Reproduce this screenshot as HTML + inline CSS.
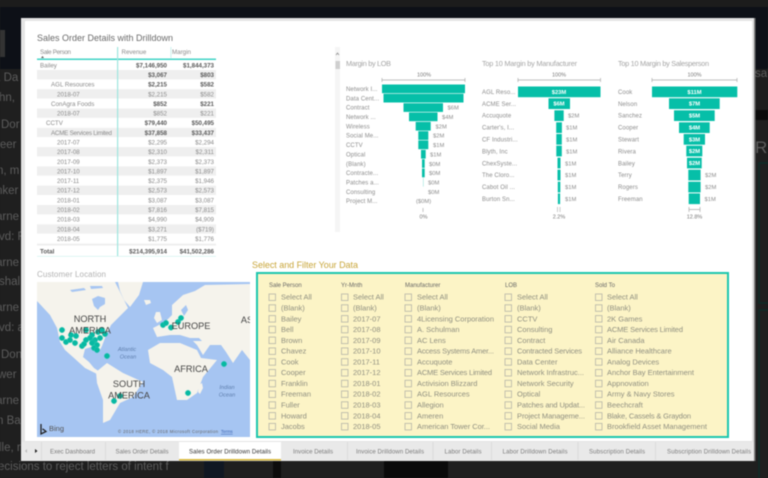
<!DOCTYPE html>
<html><head><meta charset="utf-8"><style>
html,body{margin:0;padding:0;width:768px;height:478px;overflow:hidden;background:#1f1f1f}
svg{display:block;filter:blur(.65px);font-family:"Liberation Sans",sans-serif}
.bg{font-size:11.5px;fill:#5c5c5c}
.d{font-size:6.2px;fill:#8a8a8a}
.b{font-size:6.2px;fill:#5a5a5a;font-weight:bold}
.e{text-anchor:end}
.l{font-size:6px;fill:#8c8c8c;letter-spacing:.1px}
.v{font-size:5.8px;fill:#8c8c8c}
.w{font-size:5.8px;fill:#fff;text-anchor:middle;font-weight:bold}
.t{font-size:7.3px;fill:#a5a5a5}
.m{font-size:5.5px;fill:#777;text-anchor:middle}
.h{font-size:6px;fill:#666}
.s{font-size:7.5px;fill:#8f8f80}
.tab{font-size:6.1px;fill:#7c7c7c;text-anchor:middle}
.map{font-size:9.2px;fill:#444;text-anchor:middle}
.oc{font-size:5.6px;fill:#5f7fae;text-anchor:middle;font-style:italic}
</style></head><body>
<svg width="768" height="478" viewBox="0 0 768 478" xmlns="http://www.w3.org/2000/svg">
<defs>
<clipPath id="mp"><rect x="37" y="282" width="213" height="155"/></clipPath>
<clipPath id="sl"><rect x="258" y="274" width="468" height="157"/></clipPath>
<g id="c" fill="none" stroke="#b5b5a8" stroke-width=".8">
<rect x="0" y="294" width="6.5" height="6.5"/><rect x="0" y="304.8" width="6.5" height="6.5"/><rect x="0" y="315.6" width="6.5" height="6.5"/><rect x="0" y="326.3" width="6.5" height="6.5"/><rect x="0" y="337.1" width="6.5" height="6.5"/><rect x="0" y="347.9" width="6.5" height="6.5"/><rect x="0" y="358.7" width="6.5" height="6.5"/><rect x="0" y="369.5" width="6.5" height="6.5"/><rect x="0" y="380.3" width="6.5" height="6.5"/><rect x="0" y="391" width="6.5" height="6.5"/><rect x="0" y="401.8" width="6.5" height="6.5"/><rect x="0" y="412.6" width="6.5" height="6.5"/><rect x="0" y="423.4" width="6.5" height="6.5"/>
</g>
</defs>

<!-- background page -->
<rect width="768" height="478" fill="#1f1f1f"/>
<rect width="768" height="7" fill="#1c1c1c"/>
<rect y="7" width="768" height="62" fill="#0d1017"/>
<rect x="0" y="30" width="5" height="27" fill="#333"/>
<rect x="755" y="69" width="13" height="41" fill="#1e1e1e"/>
<rect x="755" y="110" width="13" height="10" fill="#0a0a0a"/>
<rect x="759" y="163" width="12" height="140" fill="none" stroke="#0d2c28" stroke-width="1.5"/>
<rect x="759" y="310" width="12" height="170" fill="none" stroke="#0d2c28" stroke-width="1.5"/>
<rect x="204" y="461" width="20" height="17" fill="#101722"/>
<rect x="273" y="461" width="8" height="17" fill="#0c0c0c"/>
<rect x="384" y="461" width="64" height="17" fill="#0a0a0a"/>
<g class="bg">
<text x="-6" y="81">a Da</text><text x="-1" y="101">hn,</text><text x="1" y="128">Dor</text><text x="-4" y="148">reer</text>
<text x="-3" y="174">n, m</text><text x="-4" y="194">nker</text><text x="-4" y="220">arne</text><text x="-1" y="240">vd: F</text>
<text x="-4" y="266">arne</text><text x="-1" y="285">shal</text><text x="-4" y="311">arne</text><text x="-1" y="331">vd: a</text>
<text x="1" y="358">Don</text><text x="-2" y="378">wer</text><text x="-4" y="404">arne</text><text x="-3" y="424">n Ba</text>
<text x="-1" y="451">lle, r</text><text x="-2" y="470">ecisions to reject letters of intent f</text>
<text x="755" y="77">sal</text><text x="755" y="153" style="font-size:17px">R</text>
</g>

<!-- panel -->
<rect x="21" y="18" width="734" height="443" fill="#e4e4e4"/>
<rect x="25" y="21" width="727" height="420" fill="#fff"/>
<rect x="754" y="18" width="1.5" height="443" fill="#777"/>

<!-- table -->
<text x="37" y="41" font-size="9" fill="#6a6a6a" textLength="136">Sales Order Details with Drilldown</text>
<text x="40" y="54" class="d" textLength="31">Sale Person</text><text x="121.5" y="54" class="d">Revenue</text><text x="172" y="54" class="d">Margin</text>
<path d="M41 58h3l-1.500-2z" fill="#555"/>
<g fill="#efefef">
<rect x="37" y="70" width="179" height="9.3"/><rect x="37" y="89.2" width="179" height="9.3"/><rect x="37" y="108.5" width="179" height="9.3"/><rect x="37" y="127.8" width="179" height="9.3"/><rect x="37" y="147.1" width="179" height="9.3"/><rect x="37" y="166.4" width="179" height="9.3"/><rect x="37" y="185.7" width="179" height="9.3"/><rect x="37" y="205" width="179" height="9.3"/><rect x="37" y="224.3" width="179" height="9.3"/><rect x="37" y="243.6" width="179" height="2"/>
</g>
<rect x="37" y="58.5" width="179" height="1.5" fill="#3fd3c5"/>
<rect x="117" y="47" width="1.2" height="209" fill="#9fe6df"/>
<rect x="170.5" y="47" width=".8" height="11" fill="#bdeee9"/>
<rect x="37" y="256" width="179" height=".6" fill="#c9f1ec"/>
<text x="40" y="67.3" class="d">Bailey</text><text x="167" y="67.3" class="b e">$7,146,950</text><text x="214" y="67.3" class="b e">$1,844,373</text>
<text x="167" y="76.9" class="b e">$3,067</text><text x="214" y="76.9" class="b e">$803</text>
<text x="51" y="86.6" class="d">AGL Resources</text><text x="167" y="86.6" class="b e">$2,215</text><text x="214" y="86.6" class="b e">$582</text>
<text x="57" y="96.3" class="d">2018-07</text><text x="167" y="96.3" class="d e">$2,215</text><text x="214" y="96.3" class="d e">$582</text>
<text x="51" y="105.9" class="d">ConAgra Foods</text><text x="167" y="105.9" class="b e">$852</text><text x="214" y="105.9" class="b e">$221</text>
<text x="57" y="115.6" class="d">2018-07</text><text x="167" y="115.6" class="d e">$852</text><text x="214" y="115.6" class="d e">$221</text>
<text x="46" y="125.2" class="d">CCTV</text><text x="167" y="125.2" class="b e">$79,440</text><text x="214" y="125.2" class="b e">$50,495</text>
<text x="51" y="134.8" class="d" textLength="61">ACME Services Limited</text><text x="167" y="134.8" class="b e">$37,858</text><text x="214" y="134.8" class="b e">$33,437</text>
<text x="57" y="144.5" class="d">2017-07</text><text x="167" y="144.5" class="d e">$2,295</text><text x="214" y="144.5" class="d e">$2,294</text>
<text x="57" y="154.1" class="d">2017-08</text><text x="167" y="154.1" class="d e">$2,310</text><text x="214" y="154.1" class="d e">$2,311</text>
<text x="57" y="163.8" class="d">2017-09</text><text x="167" y="163.8" class="d e">$2,373</text><text x="214" y="163.8" class="d e">$2,373</text>
<text x="57" y="173.4" class="d">2017-10</text><text x="167" y="173.4" class="d e">$1,897</text><text x="214" y="173.4" class="d e">$1,897</text>
<text x="57" y="183.1" class="d">2017-11</text><text x="167" y="183.1" class="d e">$2,375</text><text x="214" y="183.1" class="d e">$1,946</text>
<text x="57" y="192.7" class="d">2017-12</text><text x="167" y="192.7" class="d e">$2,573</text><text x="214" y="192.7" class="d e">$2,573</text>
<text x="57" y="202.4" class="d">2018-01</text><text x="167" y="202.4" class="d e">$3,087</text><text x="214" y="202.4" class="d e">$3,087</text>
<text x="57" y="212" class="d">2018-02</text><text x="167" y="212" class="d e">$7,816</text><text x="214" y="212" class="d e">$7,815</text>
<text x="57" y="221.7" class="d">2018-03</text><text x="167" y="221.7" class="d e">$4,990</text><text x="214" y="221.7" class="d e">$4,909</text>
<text x="57" y="231.3" class="d">2018-04</text><text x="167" y="231.3" class="d e">$3,271</text><text x="214" y="231.3" class="d e">($719)</text>
<text x="57" y="241" class="d">2018-05</text><text x="167" y="241" class="d e">$1,775</text><text x="214" y="241" class="d e">$1,776</text>
<text x="40" y="253.3" class="b">Total</text><text x="167" y="253.3" class="b e">$214,395,914</text><text x="214" y="253.3" class="b e">$41,502,286</text>

<!-- scrollbar -->
<rect x="335" y="47" width="5" height="185" fill="#f5f5f5"/>
<path d="M336 55l1.500-2 1.500 2" fill="none" stroke="#888" stroke-width=".7"/>
<rect x="335.5" y="61" width="4.5" height="8" fill="#cfcfcf"/>

<!-- funnel 1 -->
<text x="346" y="66" class="t" textLength="45">Margin by LOB</text>
<text x="424" y="76.5" class="m">100%</text>
<path d="M382 78v4M465 78v4M382 80h83" stroke="#aaa" stroke-width=".7" fill="none"/>
<g fill="#06bfa8">
<rect x="382" y="84.5" width="83" height="8.7"/><rect x="383.5" y="93.8" width="80" height="8.7"/><rect x="403.5" y="103.2" width="39.5" height="8.7"/><rect x="409" y="112.5" width="28.5" height="8.7"/><rect x="415.7" y="121.9" width="15" height="8.7"/><rect x="418.3" y="131.2" width="10" height="8.7"/><rect x="418.3" y="140.5" width="10" height="8.7"/><rect x="421" y="149.9" width="4.7" height="8.7"/><rect x="422" y="159.2" width="2.7" height="8.7"/><rect x="422" y="168.6" width="2.7" height="8.7"/><rect x="423" y="177.9" width=".6" height="8.7" opacity=".4"/>
</g>
<g class="l">
<text x="346" y="91">Network I...</text><text x="346" y="100.4">Data Cent...</text><text x="346" y="109.7">Contract</text><text x="346" y="119">Network ...</text><text x="346" y="128.4">Wireless</text><text x="346" y="137.7">Social Me...</text><text x="346" y="147.1">CCTV</text><text x="346" y="156.4">Optical</text><text x="346" y="165.8">(Blank)</text><text x="346" y="175.1">Contracte...</text><text x="346" y="184.4">Patches a...</text><text x="346" y="193.8">Consulting</text><text x="346" y="203.1">Project M...</text>
</g>
<g class="v">
<text x="447.5" y="109.7">$6M</text><text x="442" y="119">$4M</text><text x="435.5" y="128.4">$2M</text><text x="433" y="137.7">$2M</text><text x="433" y="147.1">$1M</text><text x="430" y="156.4">$1M</text><text x="429" y="165.8">$0M</text><text x="429" y="175.1">$0M</text><text x="428" y="184.4">$0M</text><text x="428" y="193.8">$0M</text><text x="416" y="203.1">($0M)</text>
</g>
<path d="M423 208v4" stroke="#aaa" stroke-width=".7"/>
<text x="423.5" y="218.5" class="m">0%</text>

<!-- funnel 2 -->
<text x="482" y="66" class="t" textLength="95">Top 10 Margin by Manufacturer</text>
<text x="559" y="76.5" class="m">100%</text>
<path d="M518 78v4M600.5 78v4M518 80h82.5" stroke="#aaa" stroke-width=".7" fill="none"/>
<g fill="#06bfa8">
<rect x="518" y="86.5" width="82.5" height="10.7"/><rect x="548.5" y="98.3" width="21.5" height="10.7"/><rect x="554.4" y="110.3" width="9.3" height="10.7"/><rect x="556.2" y="122.3" width="5.7" height="10.7"/><rect x="556.3" y="134" width="5.5" height="10.7"/><rect x="556.3" y="145.7" width="5.5" height="10.7"/><rect x="557.5" y="157.7" width="3" height="10.7"/><rect x="557.5" y="169.7" width="3" height="10.7"/><rect x="557.8" y="181.7" width="2.5" height="10.7"/><rect x="557.9" y="193.4" width="2.2" height="10.7"/>
</g>
<text x="559" y="94" class="w">$23M</text><text x="559" y="105.7" class="w">$6M</text>
<g class="l">
<text x="482" y="94">AGL Reso...</text><text x="482" y="105.8">ACME Ser...</text><text x="482" y="117.7">Accuquote</text><text x="482" y="129.6">Carter's, I...</text><text x="482" y="141.5">CF Industri...</text><text x="482" y="153.4">Blyth, Inc</text><text x="482" y="165.3">ChexSyste...</text><text x="482" y="177.2">The Cloro...</text><text x="482" y="189.1">Cabot Oil ...</text><text x="482" y="201">Burton Sn...</text>
</g>
<g class="v">
<text x="568" y="117.7">$2M</text><text x="566" y="129.6">$1M</text><text x="566" y="141.5">$1M</text><text x="566" y="153.4">$1M</text><text x="565" y="165.3">$1M</text><text x="565" y="177.2">$1M</text><text x="565" y="189.1">$1M</text><text x="565" y="201">$1M</text>
</g>
<path d="M557.5 207v5M560 207v5" stroke="#aaa" stroke-width=".6"/>
<text x="559" y="218.5" class="m">2.2%</text>

<!-- funnel 3 -->
<text x="618" y="66" class="t" textLength="91">Top 10 Margin by Salesperson</text>
<text x="694.5" y="76.5" class="m">100%</text>
<path d="M652 78v4M737 78v4M652 80h85" stroke="#aaa" stroke-width=".7" fill="none"/>
<g fill="#06bfa8">
<rect x="652" y="86.5" width="85.3" height="10.7"/><rect x="669" y="98.3" width="50.7" height="10.7"/><rect x="674" y="110.3" width="40.7" height="10.7"/><rect x="679" y="122.3" width="30.7" height="10.7"/><rect x="683.7" y="134" width="21.3" height="10.7"/><rect x="686.3" y="145.7" width="16" height="10.7"/><rect x="687" y="157.7" width="14.7" height="10.7"/><rect x="688.3" y="169.7" width="12.3" height="10.7"/><rect x="688.3" y="181.7" width="12.3" height="10.7"/><rect x="688.7" y="193.4" width="11.3" height="10.7"/>
</g>
<text x="694.5" y="94" class="w">$11M</text><text x="694.5" y="105.7" class="w">$7M</text><text x="694.5" y="117.6" class="w">$5M</text><text x="694.5" y="129.5" class="w">$4M</text><text x="694.5" y="141.4" class="w">$3M</text><text x="694.5" y="153.2" class="w">$2M</text><text x="694.5" y="165.1" class="w">$2M</text>
<g class="l">
<text x="618" y="94">Cook</text><text x="618" y="105.8">Nelson</text><text x="618" y="117.7">Sanchez</text><text x="618" y="129.6">Cooper</text><text x="618" y="141.5">Stewart</text><text x="618" y="153.4">Rivera</text><text x="618" y="165.3">Bailey</text><text x="618" y="177.2">Terry</text><text x="618" y="189.1">Rogers</text><text x="618" y="201">Freeman</text>
</g>
<g class="v"><text x="705" y="177.2">$2M</text><text x="705" y="189.1">$2M</text><text x="704.5" y="201">$1M</text></g>
<path d="M689 207v5M700 207v5M689 209.5h11" stroke="#aaa" stroke-width=".7" fill="none"/>
<text x="694.5" y="218.5" class="m">12.8%</text>

<!-- map -->
<text x="37" y="277" font-size="8" fill="#b2b2b2" textLength="69">Customer Location</text>
<g clip-path="url(#mp)">
<rect x="37" y="282" width="213" height="155" fill="#a6c5f2"/>
<g fill="#f5f3ec">
<path d="M37 282H115L122 296L128 308L120 316L111 325L105 338L102 346L99 352L97 351L94 346L85 349L83 357L89 362L94 368L100 372L97 374L85 368L74 358L65 350L60 342L57 328L50 315L37 301Z"/>
<path d="M118 282H143L139 295L130 307L124 300L120 291Z"/>
<path d="M144 300l6 0 1 3-5 2z"/>
<path d="M156 312l4 0 2 8-5 3-3-5z"/>
<path d="M96 372L107 363L123 373L143 382L133 397L120 403L110 420L103 423L103 400L97 383Z"/>
<path d="M148 350L160 343L180 343L197 350L201 358L217 360L203 377L197 393L187 400L177 400L172 377L163 370L150 363Z"/>
<path d="M199 385l3-2 1 5-3 6-2-2z"/>
<path d="M157 337L153 328L165 322L172 315L172 305L183 295L195 291L205 285L250 284V360L242 350L233 363L226 352L221 345L210 345L203 355L197 345L190 338L180 335L170 335Z"/>
</g>
<path d="M92 299l6-3 7 2 0 6-5 3-2 3-4-4zM181 310l5-5 2 5-4 6zM187 338l12 0 3 3-13 0zM70 290l14-2 2 2-14 2zM90 286l12 0 1 2-12 1z" fill="#a6c5f2"/>
<g fill="#07b9a2" stroke="#2cc8b4" stroke-width=".4">
<circle cx="62" cy="330" r="2.7"/><circle cx="62" cy="338" r="2.7"/><circle cx="66" cy="342" r="2.7"/><circle cx="70" cy="340" r="2.7"/><circle cx="75" cy="343" r="2.7"/><circle cx="71" cy="335" r="2.7"/><circle cx="76" cy="336" r="2.7"/><circle cx="86" cy="330" r="2.7"/><circle cx="82" cy="346" r="2.7"/><circle cx="84" cy="344" r="2.7"/><circle cx="92" cy="335" r="2.7"/><circle cx="98" cy="332" r="2.7"/><circle cx="102" cy="330" r="2.7"/><circle cx="90" cy="338" r="2.7"/><circle cx="95" cy="340" r="2.7"/><circle cx="100" cy="338" r="2.7"/><circle cx="105" cy="334" r="2.7"/><circle cx="93" cy="342" r="2.7"/><circle cx="97" cy="345" r="2.7"/><circle cx="92" cy="343" r="2.7"/><circle cx="94" cy="348" r="2.7"/><circle cx="97" cy="350" r="2.7"/><circle cx="107" cy="356" r="2.7"/><circle cx="163" cy="325" r="2.7"/><circle cx="166" cy="323" r="2.7"/><circle cx="178" cy="322" r="2.7"/><circle cx="181" cy="318" r="2.7"/><circle cx="171" cy="327.5" r="2.7"/><circle cx="224" cy="364" r="2.7"/><circle cx="188" cy="393" r="2.7"/><circle cx="120" cy="396" r="2.7"/><circle cx="114" cy="401" r="2.7"/><circle cx="86" cy="340" r="2.7"/>
</g>
<text x="90" y="322" class="map">NORTH</text><text x="90" y="333.5" class="map">AMERICA</text>
<text x="191" y="329" class="map">EUROPE</text><text x="247" y="323" class="map">AS</text>
<text x="191" y="372" class="map">AFRICA</text><text x="129" y="387" class="map">SOUTH</text><text x="129" y="398.5" class="map">AMERICA</text>
<text x="127" y="351" class="oc">Atlantic</text><text x="128" y="358.5" class="oc">Ocean</text>
<text x="227" y="389" class="oc">Indian</text><text x="227" y="396.5" class="oc">Ocean</text>
<path d="M41 424v10l5-2.500-2.500-2-1-.5" fill="none" stroke="#222" stroke-width="1.300"/>
<text x="49" y="431" font-size="7.5" fill="#555">Bing</text>
<text x="118" y="433" font-size="4.3" fill="#666" textLength="100">© 2018 HERE, © 2018 Microsoft Corporation</text>
<text x="221" y="433" font-size="4.3" fill="#3a62b0" text-decoration="underline">Terms</text>
</g>

<!-- slicer -->
<text x="252" y="268" font-size="9" fill="#c9a63a" textLength="106">Select and Filter Your Data</text>
<rect x="257" y="273" width="471" height="164" fill="#fcf4c6" stroke="#1cc6ae" stroke-width="2"/>
<g class="h"><text x="269" y="287">Sale Person</text><text x="341" y="287">Yr-Mnth</text><text x="405" y="287">Manufacturer</text><text x="505" y="287">LOB</text><text x="595" y="287">Sold To</text></g>
<g clip-path="url(#sl)">
<use href="#c" x="269"/><use href="#c" x="341.5"/><use href="#c" x="405"/><use href="#c" x="505"/><use href="#c" x="595.5"/>
<g class="s">
<text x="281" y="299.7">Select All</text><text x="281" y="310.5">(Blank)</text><text x="281" y="321.3">Bailey</text><text x="281" y="332">Bell</text><text x="281" y="342.8">Brown</text><text x="281" y="353.6">Chavez</text><text x="281" y="364.4">Cook</text><text x="281" y="375.2">Cooper</text><text x="281" y="386">Franklin</text><text x="281" y="396.7">Freeman</text><text x="281" y="407.5">Fuller</text><text x="281" y="418.3">Howard</text><text x="281" y="429.1">Jacobs</text>
<text x="353" y="299.7">Select All</text><text x="353" y="310.5">(Blank)</text><text x="353" y="321.3">2017-07</text><text x="353" y="332">2017-08</text><text x="353" y="342.8">2017-09</text><text x="353" y="353.6">2017-10</text><text x="353" y="364.4">2017-11</text><text x="353" y="375.2">2017-12</text><text x="353" y="386">2018-01</text><text x="353" y="396.7">2018-02</text><text x="353" y="407.5">2018-03</text><text x="353" y="418.3">2018-04</text><text x="353" y="429.1">2018-05</text>
<text x="417" y="299.7">Select All</text><text x="417" y="310.5">(Blank)</text><text x="417" y="321.3" textLength="77">4Licensing Corporation</text><text x="417" y="332">A. Schulman</text><text x="417" y="342.8">AC Lens</text><text x="417" y="353.6" textLength="77">Access Systems Amer...</text><text x="417" y="364.4">Accuquote</text><text x="417" y="375.2" textLength="75">ACME Services Limited</text><text x="417" y="386">Activision Blizzard</text><text x="417" y="396.7">AGL Resources</text><text x="417" y="407.5">Allegion</text><text x="417" y="418.3">Ameren</text><text x="417" y="429.1" textLength="73">American Tower Cor...</text>
<text x="517" y="299.7">Select All</text><text x="517" y="310.5">(Blank)</text><text x="517" y="321.3">CCTV</text><text x="517" y="332">Consulting</text><text x="517" y="342.8">Contract</text><text x="517" y="353.6" textLength="65">Contracted Services</text><text x="517" y="364.4">Data Center</text><text x="517" y="375.2" textLength="67">Network Infrastruc...</text><text x="517" y="386">Network Security</text><text x="517" y="396.7">Optical</text><text x="517" y="407.5" textLength="68">Patches and Updat...</text><text x="517" y="418.3" textLength="68">Project Manageme...</text><text x="517" y="429.1">Social Media</text>
<text x="607" y="299.7">Select All</text><text x="607" y="310.5">(Blank)</text><text x="607" y="321.3">2K Games</text><text x="607" y="332" textLength="76">ACME Services Limited</text><text x="607" y="342.8">Air Canada</text><text x="607" y="353.6">Alliance Healthcare</text><text x="607" y="364.4">Analog Devices</text><text x="607" y="375.2" textLength="87">Anchor Bay Entertainment</text><text x="607" y="386">Appnovation</text><text x="607" y="396.7">Army &amp; Navy Stores</text><text x="607" y="407.5">Beechcraft</text><text x="607" y="418.3" textLength="84">Blake, Cassels &amp; Graydon</text><text x="607" y="429.1" textLength="100">Brookfield Asset Management</text>
</g>
</g>

<!-- tabs -->
<rect x="21" y="442" width="733" height="19" fill="#e9e9e9"/>
<rect x="179" y="442" width="102" height="17.5" fill="#fff"/>
<rect x="179" y="459" width="102" height="1.5" fill="#d9b93c"/>
<path d="M105.500 442v18M347.500 442v18M433 442v18M491.500 442v18M578 442v18M655.500 442v18M41.500 442v18" stroke="#d8d8d8" stroke-width=".8"/>
<path d="M27 449l-2 2 2 2z" fill="#bbb"/><path d="M35 449l2.500 2-2.500 2z" fill="#222"/>
<text x="72.5" y="453.5" class="tab" textLength="45">Exec Dashboard</text>
<text x="142" y="453.5" class="tab" textLength="53">Sales Order Details</text>
<text x="230" y="453.5" class="tab" style="fill:#333" textLength="82">Sales Order Drilldown Details</text>
<text x="313" y="453.5" class="tab" textLength="40">Invoice Details</text>
<text x="390" y="453.5" class="tab" textLength="68">Invoice Drilldown Details</text>
<text x="463" y="453.5" class="tab" textLength="37">Labor Details</text>
<text x="535" y="453.5" class="tab" textLength="65">Labor Drilldown Details</text>
<text x="617" y="453.5" class="tab" textLength="56">Subscription Details</text>
<text x="709" y="453.5" class="tab" textLength="84">Subscription Drilldown Details</text>
</svg>
</body></html>
